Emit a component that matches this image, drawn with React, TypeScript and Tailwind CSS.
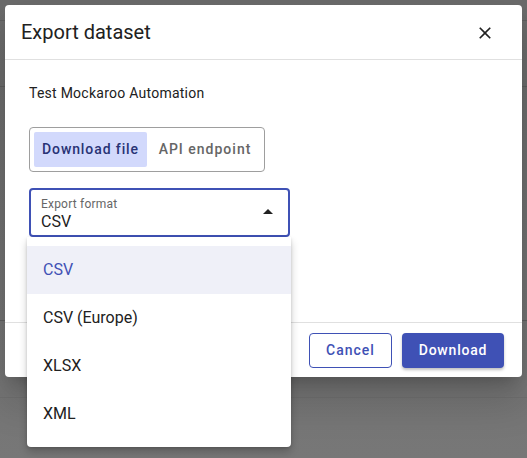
import React from "react";

const font = { fontFamily: "Roboto, 'Noto Sans', sans-serif" };

export default function App() {
  return (
    <div
      className="relative h-[458px] w-[527px] overflow-hidden bg-gradient-to-b from-[#6a6a6a] to-[#777777] px-[5px] pt-[5px]"
      style={font}
    >
      {/* faint underlying page lines */}
      <div className="pointer-events-none absolute left-0 top-[20px] h-px w-full bg-[#5e5e5e]" />
      <div className="pointer-events-none absolute left-0 top-[86px] h-px w-full bg-[#5e5e5e]" />
      <div className="pointer-events-none absolute left-0 top-[320px] h-px w-full bg-[#5e5e5e]" />
      <div className="pointer-events-none absolute left-0 top-[397px] h-px w-full bg-[#6f6f6f]" />

      <div className="relative w-[517px] rounded-[4px] bg-white shadow-[0_11px_15px_-7px_rgba(0,0,0,0.2),0_24px_38px_3px_rgba(0,0,0,0.14)]">
        {/* header */}
        <div className="flex h-[55px] items-center justify-between border-b border-[#e0e0e0] pl-[16px] pr-[27px]">
          <span className="text-[20px] leading-none text-[#212121]">Export dataset</span>
          <svg width="20" height="20" viewBox="0 0 24 24" className="mt-[1px]">
            <path
              fill="#212121"
              d="M19 6.41 17.59 5 12 10.59 6.41 5 5 6.41 10.59 12 5 17.59 6.41 19 12 13.41 17.59 19 19 17.59 13.41 12z"
            />
          </svg>
        </div>

        {/* body */}
        <div className="flex h-[262px] flex-col px-[24px] pt-[25px]">
          <div className="text-[14px] leading-[16px] tracking-[0.25px] text-[#212121]">
            Test Mockaroo Automation
          </div>

          <div className="mt-[26px] flex h-[45px] w-[236px] items-center gap-[4px] rounded-[4px] border border-[#9e9e9e] px-[4px]">
            <div className="flex h-[35px] w-[113px] items-center justify-center rounded-[2px] bg-[#d2d9fc] text-[14px] font-medium tracking-[0.9px] text-[#283375]">
              Download file
            </div>
            <div className="flex h-[35px] w-[108px] items-center justify-center text-[14px] font-medium tracking-[1px] text-[#666666]">
              API endpoint
            </div>
          </div>

          <div className="relative mt-[16px] h-[49px] w-[261px] rounded-[4px] border-2 border-[#3f51b5] pl-[10px] pt-[7px]">
            <div className="text-[12px] leading-[14px] tracking-[0.2px] text-[#666666]">Export format</div>
            <div className="mt-[2px] text-[16px] leading-[18px] text-[#212121]">CSV</div>
            <svg width="10" height="5" viewBox="0 0 10 5" className="absolute right-[15px] top-[19px]">
              <path d="M0 5 L5 0 L10 5 Z" fill="#212121" />
            </svg>
          </div>
        </div>

        {/* footer */}
        <div className="flex h-[55px] items-center justify-end gap-[10px] border-t border-[#e0e0e0] pr-[18px]">
          <button className="flex h-[35px] w-[83px] items-center justify-center rounded-[4px] border border-[#3f51b5] bg-white text-[14px] font-medium tracking-[1px] text-[#3f51b5]">
            Cancel
          </button>
          <button className="flex h-[35px] w-[102px] items-center justify-center rounded-[4px] bg-[#3f51b5] text-[14px] font-medium tracking-[0.8px] text-white shadow-[0_2px_3px_rgba(0,0,0,0.25)]">
            Download
          </button>
        </div>
      </div>

      {/* dropdown menu (overlay) */}
      <div className="absolute left-[27px] top-[237px] w-[264px] rounded-b-[4px] bg-white py-[9px] shadow-[0_5px_8px_rgba(0,0,0,0.2),0_1px_3px_rgba(0,0,0,0.15)]">
        {["CSV", "CSV (Europe)", "XLSX", "XML"].map((o, i) => (
          <div
            key={o}
            className={
              i === 0
                ? "flex h-[48px] items-center bg-[#eff0f8] pl-[16px] text-[16px] text-[#3f51b5]"
                : "flex h-[48px] items-center pl-[16px] text-[16px] text-[#212121]"
            }
          >
            {o}
          </div>
        ))}
      </div>
    </div>
  );
}
